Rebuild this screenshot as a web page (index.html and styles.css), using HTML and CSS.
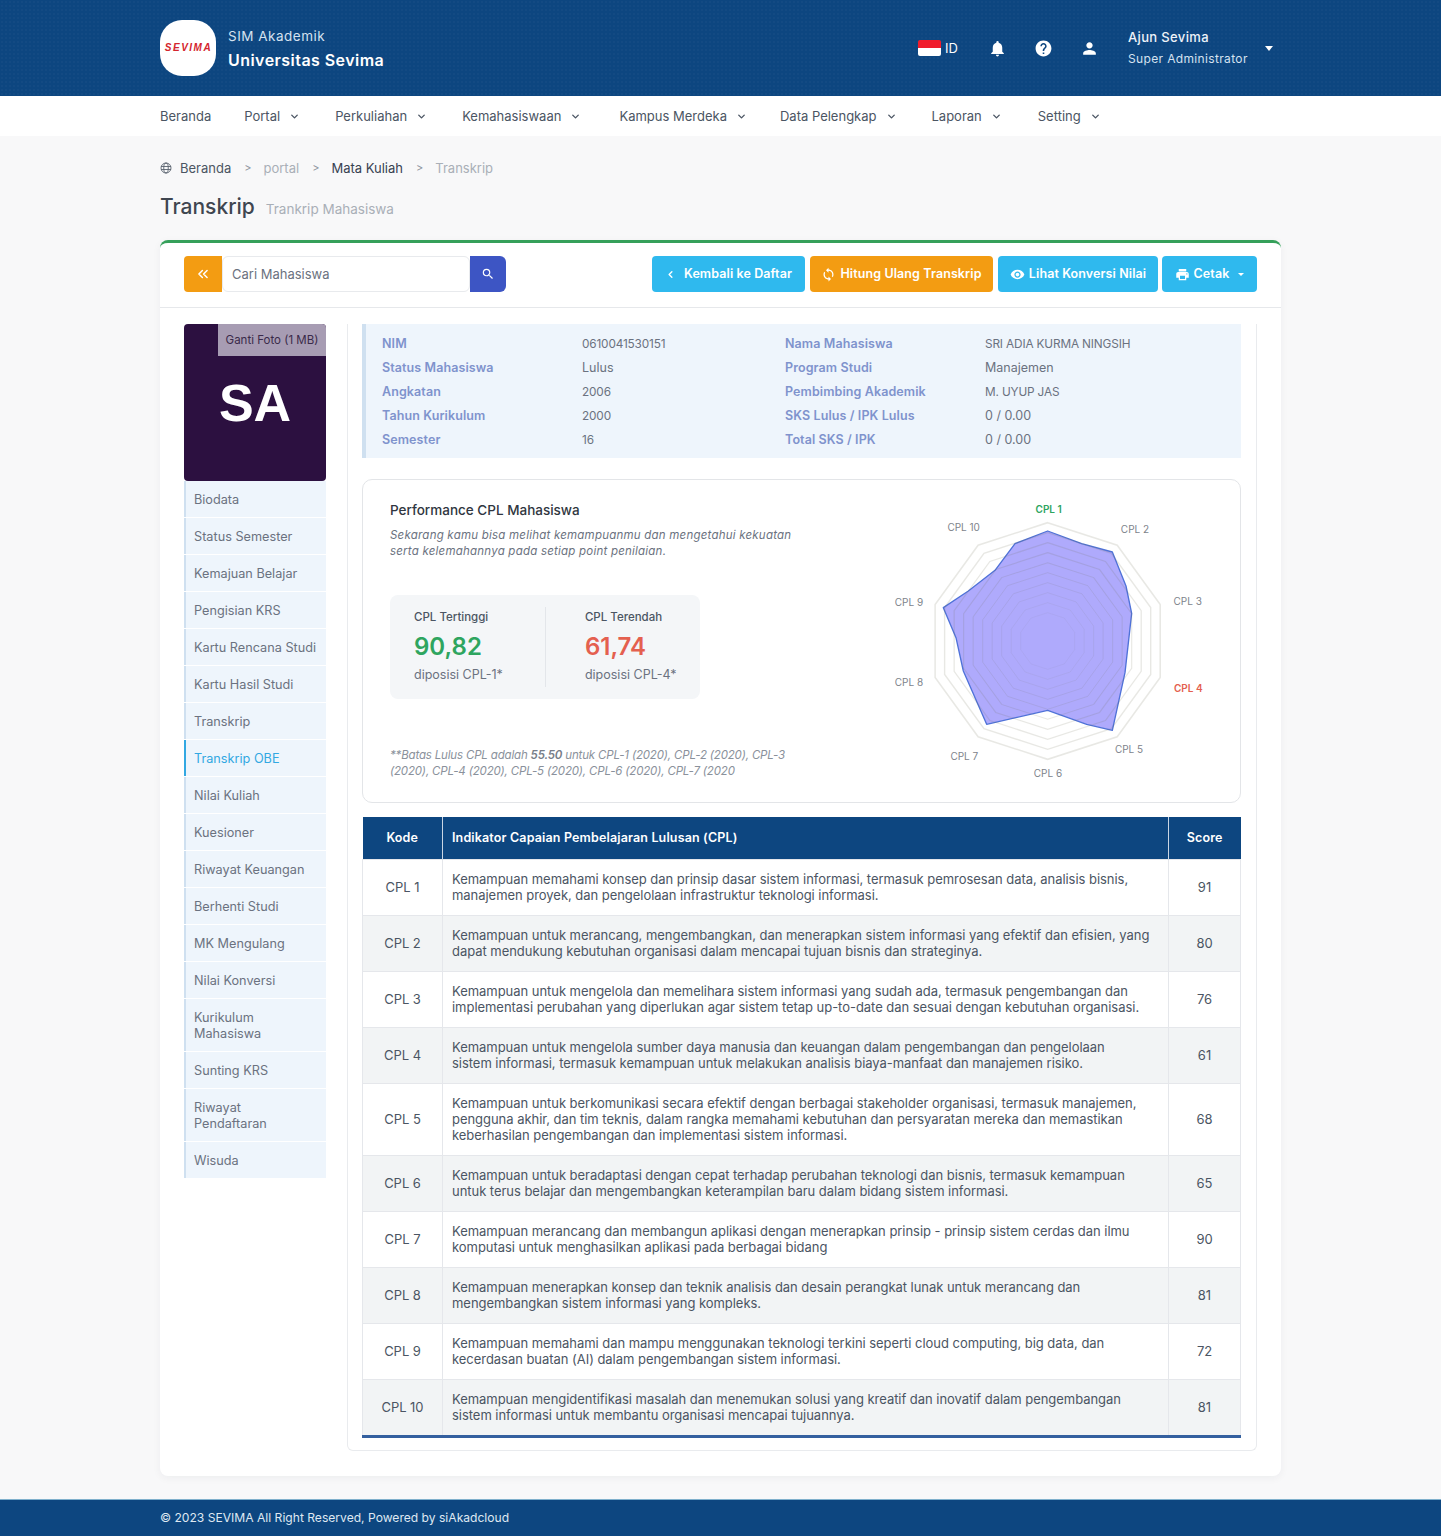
FILE: index.html
```html
<!DOCTYPE html>
<html lang="id">
<head>
<meta charset="utf-8">
<title>Transkrip</title>
<link rel="stylesheet" href="styles.css">
</head>
<body>
<svg class="defs" width="0" height="0" aria-hidden="true">
  <defs>
    <symbol id="chev" viewBox="0 0 24 24"><path d="M6 9l6 6 6-6" fill="none" stroke="currentColor" stroke-width="3" stroke-linecap="round" stroke-linejoin="round"/></symbol>
    <polygon id="deca" points="0,-100 58.78,-80.9 95.11,-30.9 95.11,30.9 58.78,80.9 0,100 -58.78,80.9 -95.11,30.9 -95.11,-30.9 -58.78,-80.9"/>
  </defs>
</svg>

<header class="topbar">
  <div class="wrap topbar-in">
    <div class="brand">
      <div class="logo"><span class="logo-text">SEVIMA</span></div>
      <div class="brand-text">
        <div class="brand-sub">SIM Akademik</div>
        <div class="brand-name">Universitas Sevima</div>
      </div>
    </div>
    <div class="tools">
      <div class="lang"><span class="flag"></span><span>ID</span></div>
      <svg class="tool bell" viewBox="0 0 24 24"><path d="M12 22c1.1 0 2-.9 2-2h-4a2 2 0 0 0 2 2zm6-6v-5c0-3.07-1.63-5.64-4.5-6.32V4a1.5 1.5 0 0 0-3 0v.68C7.64 5.36 6 7.92 6 11v5l-2 2v1h16v-1l-2-2z"/></svg>
      <svg class="tool help" viewBox="0 0 24 24"><path d="M12 2C6.48 2 2 6.48 2 12s4.48 10 10 10 10-4.48 10-10S17.52 2 12 2zm1 17h-2v-2h2v2zm2.07-7.75l-.9.92C13.45 12.9 13 13.5 13 15h-2v-.5c0-1.1.45-2.1 1.17-2.83l1.24-1.26c.37-.36.59-.86.59-1.41 0-1.1-.9-2-2-2s-2 .9-2 2H8c0-2.21 1.79-4 4-4s4 1.79 4 4c0 .88-.36 1.68-.93 2.25z"/></svg>
      <svg class="tool user" viewBox="0 0 24 24"><path d="M12 12c2.21 0 4-1.79 4-4s-1.79-4-4-4-4 1.79-4 4 1.79 4 4 4zm0 2c-2.67 0-8 1.34-8 4v2h16v-2c0-2.66-5.33-4-8-4z"/></svg>
      <div class="who">
        <div class="who-name">Ajun Sevima</div>
        <div class="who-role">Super Administrator</div>
      </div>
      <span class="caret-lg"></span>
    </div>
  </div>
</header>

<nav class="navbar">
  <div class="wrap nav-in">
    <a class="nav-item n1">Beranda</a>
    <a class="nav-item n2">Portal<svg class="chev"><use href="#chev"/></svg></a>
    <a class="nav-item n3">Perkuliahan<svg class="chev"><use href="#chev"/></svg></a>
    <a class="nav-item n4">Kemahasiswaan<svg class="chev"><use href="#chev"/></svg></a>
    <a class="nav-item n5">Kampus Merdeka<svg class="chev"><use href="#chev"/></svg></a>
    <a class="nav-item n6">Data Pelengkap<svg class="chev"><use href="#chev"/></svg></a>
    <a class="nav-item n7">Laporan<svg class="chev"><use href="#chev"/></svg></a>
    <a class="nav-item n8">Setting<svg class="chev"><use href="#chev"/></svg></a>
  </div>
</nav>

<main class="wrap main">
  <div class="crumbs">
    <svg class="globe" viewBox="0 0 24 24"><g fill="none" stroke="currentColor" stroke-width="1.8"><circle cx="12" cy="12" r="10"/><ellipse cx="12" cy="12" rx="4.5" ry="10"/><path d="M2 9h20M2 15h20"/></g></svg>
    <span class="crumb c-home">Beranda</span><span class="sep">&gt;</span>
    <span class="crumb c-muted c-portal">portal</span><span class="sep">&gt;</span>
    <span class="crumb c-dark">Mata Kuliah</span><span class="sep">&gt;</span>
    <span class="crumb c-muted">Transkrip</span>
  </div>
  <div class="title-row">
    <h1 class="title">Transkrip</h1>
    <span class="subtitle">Trankrip Mahasiswa</span>
  </div>

  <section class="card">
    <div class="toolbar">
      <div class="search">
        <button class="s-back"><svg class="s-ico" viewBox="0 0 24 24"><path d="M11 6l-6 6 6 6M19 6l-6 6 6 6" fill="none" stroke="currentColor" stroke-width="2.6" stroke-linecap="round" stroke-linejoin="round"/></svg></button>
        <div class="s-input">Cari Mahasiswa</div>
        <button class="s-go"><svg class="s-ico" viewBox="0 0 24 24"><path fill="currentColor" d="M15.5 14h-.79l-.28-.27A6.47 6.47 0 0 0 16 9.5 6.5 6.5 0 1 0 9.5 16c1.61 0 3.09-.59 4.23-1.57l.27.28v.79l5 4.99L20.49 19l-4.99-5zm-6 0C7.01 14 5 11.99 5 9.5S7.01 5 9.5 5 14 7.01 14 9.5 11.99 14 9.5 14z"/></svg></button>
      </div>
      <div class="actions">
        <button class="btn b-back"><svg class="b-ico small" viewBox="0 0 24 24"><path d="M15 6l-6 6 6 6" fill="none" stroke="currentColor" stroke-width="3" stroke-linecap="round" stroke-linejoin="round"/></svg>Kembali ke Daftar</button>
        <button class="btn b-calc"><svg class="b-ico" viewBox="0 0 24 24"><path fill="currentColor" d="M12 4V1L8 5l4 4V6c3.31 0 6 2.69 6 6 0 1.01-.25 1.97-.7 2.8l1.46 1.46A7.93 7.93 0 0 0 20 12c0-4.42-3.58-8-8-8zm0 14c-3.31 0-6-2.69-6-6 0-1.01.25-1.97.7-2.8L5.24 7.74A7.93 7.93 0 0 0 4 12c0 4.42 3.58 8 8 8v3l4-4-4-4v3z"/></svg>Hitung Ulang Transkrip</button>
        <button class="btn b-conv"><svg class="b-ico" viewBox="0 0 24 24"><path fill="currentColor" d="M12 4.5C7 4.5 2.73 7.61 1 12c1.73 4.39 6 7.5 11 7.5s9.27-3.11 11-7.5c-1.73-4.39-6-7.5-11-7.5zM12 17c-2.76 0-5-2.24-5-5s2.24-5 5-5 5 2.24 5 5-2.24 5-5 5zm0-8c-1.66 0-3 1.34-3 3s1.34 3 3 3 3-1.34 3-3-1.34-3-3-3z"/></svg>Lihat Konversi Nilai</button>
        <button class="btn b-print"><svg class="b-ico" viewBox="0 0 24 24"><path fill="currentColor" d="M19 8H5c-1.66 0-3 1.34-3 3v6h4v4h12v-4h4v-6c0-1.66-1.34-3-3-3zm-3 11H8v-5h8v5zm3-7c-.55 0-1-.45-1-1s.45-1 1-1 1 .45 1 1-.45 1-1 1zm-1-9H6v4h12V3z"/></svg>Cetak<span class="caret-sm"></span></button>
      </div>
    </div>

    <div class="content">
      <aside class="side">
        <div class="avatar">
          <div class="ganti">Ganti Foto (1 MB)</div>
          <div class="initials">SA</div>
        </div>
        <ul class="menu">
          <li class="m-item">Biodata</li>
          <li class="m-item">Status Semester</li>
          <li class="m-item">Kemajuan Belajar</li>
          <li class="m-item">Pengisian KRS</li>
          <li class="m-item">Kartu Rencana Studi</li>
          <li class="m-item">Kartu Hasil Studi</li>
          <li class="m-item">Transkrip</li>
          <li class="m-item active">Transkrip OBE</li>
          <li class="m-item">Nilai Kuliah</li>
          <li class="m-item">Kuesioner</li>
          <li class="m-item">Riwayat Keuangan</li>
          <li class="m-item">Berhenti Studi</li>
          <li class="m-item">MK Mengulang</li>
          <li class="m-item">Nilai Konversi</li>
          <li class="m-item">Kurikulum<br>Mahasiswa</li>
          <li class="m-item">Sunting KRS</li>
          <li class="m-item">Riwayat<br>Pendaftaran</li>
          <li class="m-item">Wisuda</li>
        </ul>
      </aside>

      <div class="panel">
        <div class="info">
          <div class="i-l">NIM</div><div class="i-v tight">0610041530151</div><div class="i-l">Nama Mahasiswa</div><div class="i-v tight">SRI ADIA KURMA NINGSIH</div>
          <div class="i-l">Status Mahasiswa</div><div class="i-v">Lulus</div><div class="i-l">Program Studi</div><div class="i-v">Manajemen</div>
          <div class="i-l">Angkatan</div><div class="i-v tight">2006</div><div class="i-l">Pembimbing Akademik</div><div class="i-v tight">M. UYUP JAS</div>
          <div class="i-l">Tahun Kurikulum</div><div class="i-v tight">2000</div><div class="i-l">SKS Lulus / IPK Lulus</div><div class="i-v">0 / 0.00</div>
          <div class="i-l">Semester</div><div class="i-v tight">16</div><div class="i-l">Total SKS / IPK</div><div class="i-v">0 / 0.00</div>
        </div>

        <div class="perf">
          <div class="perf-left">
            <h2 class="perf-title">Performance CPL Mahasiswa</h2>
            <p class="perf-desc">Sekarang kamu bisa melihat kemampuanmu dan mengetahui kekuatan<br>serta kelemahannya pada setiap point penilaian.</p>
            <div class="stats">
              <div class="stat">
                <div class="stat-h">CPL Tertinggi</div>
                <div class="stat-n green">90,82</div>
                <div class="stat-p">diposisi CPL-1*</div>
              </div>
              <div class="stat stat-r">
                <div class="stat-h">CPL Terendah</div>
                <div class="stat-n red">61,74</div>
                <div class="stat-p">diposisi CPL-4*</div>
              </div>
            </div>
            <p class="perf-note">**Batas Lulus CPL adalah <b>55.50</b> untuk CPL-1 (2020), CPL-2 (2020), CPL-3<br>(2020), CPL-4 (2020), CPL-5 (2020), CPL-6 (2020), CPL-7 (2020</p>
          </div>
          <svg class="radar" viewBox="0 0 1020 900">
            <polygon class="area" points="503,120 605,158 697,183 738,285 755,367 735,545 697,718 620,700 503,658 320,700 250,540 228,440 190,350 265,300 345,238 405,158"/>
            <g transform="translate(503 450)">
              <g class="rings">
                <use href="#deca" transform="scale(3.55)"/>
                <use href="#deca" transform="scale(3.25)"/>
                <use href="#deca" transform="scale(2.95)"/>
                <use href="#deca" transform="scale(2.65)"/>
                <use href="#deca" transform="scale(2.35)"/>
                <use href="#deca" transform="scale(2.05)"/>
                <use href="#deca" transform="scale(1.75)"/>
                <use href="#deca" transform="scale(1.45)"/>
                <use href="#deca" transform="scale(1.15)"/>
                <use href="#deca" transform="scale(0.85)"/>
              </g>
            </g>
            <g class="labels">
              <text class="l-hi" x="506" y="67" text-anchor="middle">CPL 1</text>
              <text x="765" y="127" text-anchor="middle">CPL 2</text>
              <text x="923" y="343" text-anchor="middle">CPL 3</text>
              <text class="l-lo" x="925" y="604" text-anchor="middle">CPL 4</text>
              <text x="747" y="785" text-anchor="middle">CPL 5</text>
              <text x="504" y="857" text-anchor="middle">CPL 6</text>
              <text x="253" y="806" text-anchor="middle">CPL 7</text>
              <text x="87" y="584" text-anchor="middle">CPL 8</text>
              <text x="87" y="345" text-anchor="middle">CPL 9</text>
              <text x="251" y="120" text-anchor="middle">CPL 10</text>
            </g>
          </svg>
        </div>

        <table class="cpl">
          <colgroup><col class="c1"><col class="c2"><col class="c3"></colgroup>
          <thead>
            <tr><th class="ctr">Kode</th><th>Indikator Capaian Pembelajaran Lulusan (CPL)</th><th class="ctr">Score</th></tr>
          </thead>
          <tbody>
            <tr><td class="ctr">CPL 1</td><td>Kemampuan memahami konsep dan prinsip dasar sistem informasi, termasuk pemrosesan data, analisis bisnis,<br>manajemen proyek, dan pengelolaan infrastruktur teknologi informasi.</td><td class="ctr">91</td></tr>
            <tr><td class="ctr">CPL 2</td><td>Kemampuan untuk merancang, mengembangkan, dan menerapkan sistem informasi yang efektif dan efisien, yang<br>dapat mendukung kebutuhan organisasi dalam mencapai tujuan bisnis dan strateginya.</td><td class="ctr">80</td></tr>
            <tr><td class="ctr">CPL 3</td><td>Kemampuan untuk mengelola dan memelihara sistem informasi yang sudah ada, termasuk pengembangan dan<br>implementasi perubahan yang diperlukan agar sistem tetap up-to-date dan sesuai dengan kebutuhan organisasi.</td><td class="ctr">76</td></tr>
            <tr><td class="ctr">CPL 4</td><td>Kemampuan untuk mengelola sumber daya manusia dan keuangan dalam pengembangan dan pengelolaan<br>sistem informasi, termasuk kemampuan untuk melakukan analisis biaya-manfaat dan manajemen risiko.</td><td class="ctr">61</td></tr>
            <tr><td class="ctr">CPL 5</td><td>Kemampuan untuk berkomunikasi secara efektif dengan berbagai stakeholder organisasi, termasuk manajemen,<br>pengguna akhir, dan tim teknis, dalam rangka memahami kebutuhan dan persyaratan mereka dan memastikan<br>keberhasilan pengembangan dan implementasi sistem informasi.</td><td class="ctr">68</td></tr>
            <tr><td class="ctr">CPL 6</td><td>Kemampuan untuk beradaptasi dengan cepat terhadap perubahan teknologi dan bisnis, termasuk kemampuan<br>untuk terus belajar dan mengembangkan keterampilan baru dalam bidang sistem informasi.</td><td class="ctr">65</td></tr>
            <tr><td class="ctr">CPL 7</td><td>Kemampuan merancang dan membangun aplikasi dengan menerapkan prinsip - prinsip sistem cerdas dan ilmu<br>komputasi untuk menghasilkan aplikasi pada berbagai bidang</td><td class="ctr">90</td></tr>
            <tr><td class="ctr">CPL 8</td><td>Kemampuan menerapkan konsep dan teknik analisis dan desain perangkat lunak untuk merancang dan<br>mengembangkan sistem informasi yang kompleks.</td><td class="ctr">81</td></tr>
            <tr><td class="ctr">CPL 9</td><td>Kemampuan memahami dan mampu menggunakan teknologi terkini seperti cloud computing, big data, dan<br>kecerdasan buatan (AI) dalam pengembangan sistem informasi.</td><td class="ctr">72</td></tr>
            <tr><td class="ctr">CPL 10</td><td>Kemampuan mengidentifikasi masalah dan menemukan solusi yang kreatif dan inovatif dalam pengembangan<br>sistem informasi untuk membantu organisasi mencapai tujuannya.</td><td class="ctr">81</td></tr>
          </tbody>
        </table>
      </div>
    </div>
  </section>
</main>

<footer class="footer">
  <div class="wrap">© 2023 SEVIMA All Right Reserved, Powered by siAkadcloud</div>
</footer>
</body>
</html>
```

FILE: styles.css
```css
* { box-sizing: border-box; }
html, body { margin: 0; padding: 0; }
body {
  background: #f8f8f9;
  color: #4b5563;
  font-family: "Inter", "Noto Sans", sans-serif;
  font-size: 13px;
  line-height: 16px;
}
.defs { position: absolute; }
.wrap { width: 1121px; margin: 0 auto; }
h1, h2, p, ul { margin: 0; padding: 0; }
ul { list-style: none; }
button { border: 0; font: inherit; cursor: pointer; }

/* top bar */
.topbar {
  height: 96px;
  background-color: #0d4680;
  background-image: radial-gradient(rgba(255,255,255,.025) 1px, transparent 1px);
  background-size: 4px 4px;
}
.topbar-in { height: 96px; display: flex; justify-content: space-between; align-items: center; }
.brand { display: flex; align-items: center; gap: 12px; }
.logo {
  width: 56px; height: 56px; border-radius: 22px; background: #fff;
  display: flex; align-items: center; justify-content: center;
}
.logo-text { color: #d4262e; font: italic 800 10px/1 "Liberation Sans", sans-serif; letter-spacing: 1.5px; margin-right: -1px; }
.brand-text { padding-top: 2px; }
.brand-sub { color: #d5e2f0; font-size: 13.5px; line-height: 20px; margin-bottom: 2px; letter-spacing: .5px; }
.brand-name { color: #fff; font-size: 16px; font-weight: 600; line-height: 24px; letter-spacing: .45px; }
.tools { display: flex; align-items: center; width: 363px; height: 96px; color: #fff; padding-right: 8px; }
.lang { display: flex; align-items: center; gap: 4px; font-size: 13px; width: 66px; }
.flag {
  width: 23px; height: 16px; border-radius: 2px;
  background: linear-gradient(#f01c2c 50%, #fff 50%);
}
.tool { width: 19px; height: 19px; fill: #fff; margin-right: 27px; flex: none; }
.bell { margin-left: 4px; }
.user { margin-right: 29px; }
.who { flex: 1; }
.who-name { font-size: 13px; font-weight: 500; line-height: 16px; color: #eef3f9; margin-bottom: 6px; margin-top: -1px; letter-spacing: .35px; }
.who-role { font-size: 12px; line-height: 16px; color: #d5e2f0; letter-spacing: .35px; }
.caret-lg { width: 0; height: 0; border: 4.5px solid transparent; border-top: 5px solid #fff; border-bottom: 0; }

/* nav */
.navbar { height: 40px; background: #fff; }
.nav-in { height: 40px; display: flex; align-items: center; }
.nav-item { display: flex; align-items: center; color: #4b5563; font-size: 13px; white-space: nowrap; }
.chev { width: 11px; height: 11px; margin-left: 9px; color: #4b5563; }
.n2 { margin-left: 33px; } .n3 { margin-left: 35px; } .n4 { margin-left: 35px; }
.n5 { margin-left: 38px; } .n6 { margin-left: 33px; } .n7 { margin-left: 35px; } .n8 { margin-left: 36px; }

/* head of page */
.main { padding-top: 24px; padding-bottom: 23px; }
.crumbs { display: flex; align-items: center; height: 16px; color: #4b5563; }
.globe { width: 12px; height: 12px; color: #59626e; margin-right: 8px; }
.crumb { font-size: 13px; }
.c-muted { color: #a9afb7; }
.c-dark { color: #374151; }
.sep { color: #8f969f; font-size: 11px; margin: 0 12px 0 13px; }
.title-row { display: flex; align-items: baseline; gap: 11px; margin-top: 18px; height: 29px; }
.title { font-size: 21px; font-weight: 500; line-height: 26px; color: #3f4650; }
.subtitle { font-size: 13.5px; color: #a9afb7; }

/* card */
.card {
  margin-top: 17px;
  background: #fff;
  border-top: 3px solid #35a05a;
  border-radius: 8px;
  box-shadow: 0 2px 8px rgba(20,30,50,.05);
  height: 1236px;
}
.toolbar {
  height: 65px; padding: 13px 24px 0;
  display: flex; justify-content: space-between; align-items: flex-start;
  border-bottom: 1px solid #e6e8eb;
}
.search { display: flex; height: 36px; width: 322px; }
.s-back { width: 38px; background: #f39c12; color: #fff; border-radius: 4px 0 0 4px; display: flex; align-items: center; justify-content: center; padding: 0; }
.s-input { width: 248px; border: 1px solid #e8eaed; border-radius: 6px; padding: 0 9px; line-height: 34px; color: #6b7280; }
.s-go { width: 36px; background: #3d55c4; color: #fff; border-radius: 0 6px 6px 0; display: flex; align-items: center; justify-content: center; padding: 0; }
.s-ico { width: 14px; height: 14px; }
.actions { display: flex; gap: 4px; }
.btn {
  height: 36px; border-radius: 4px; color: #fff; font-size: 12.5px; font-weight: 600;
  display: flex; align-items: center; justify-content: center; white-space: nowrap; padding: 0; letter-spacing: .1px;
}
.b-back, .b-conv, .b-print { background: #2fb9ee; }
.b-calc { background: #f39c12; margin-left: 1px; }
.b-back { width: 153px; }
.b-calc { width: 183px; }
.b-conv { width: 160px; margin-left: 1px; }
.b-print { width: 95px; }
.b-ico { width: 15px; height: 15px; margin-right: 4px; flex: none; }
.b-ico.small { width: 11px; height: 11px; margin-right: 8px; }
.caret-sm { width: 0; height: 0; margin-left: 9px; border: 3px solid transparent; border-top: 3.5px solid #fff; border-bottom: 0; }

.content { display: flex; align-items: flex-start; padding: 16px 24px 0; }
.side { width: 142px; flex: none; }
.avatar { height: 157px; background: #2c1040; border-radius: 4px; position: relative; text-align: center; color: #fff; }
.ganti {
  position: absolute; top: 0; right: 0; width: 108px; height: 32px;
  background: #a79cb3; color: #3a2a4a; font-size: 11.5px; line-height: 32px; border-top-right-radius: 4px;
}
.initials { font-size: 52px; font-weight: 700; line-height: 60px; padding-top: 49px; font-family: "Liberation Sans", sans-serif; }
.m-item {
  background: #eef5fc; border-left: 2px solid #cfe0f0; padding: 11px 8px 9px;
  margin-bottom: 1px; color: #6b7280; font-size: 12.7px; white-space: nowrap;
}
.m-item:last-child { margin-bottom: 0; }
.m-item.active { color: #32a8e2; border-left-color: #32a8e2; }

.panel {
  margin-left: 21px; width: 910px; height: 1127px; padding: 0 15px 0 14px;
  border: 1px solid #e9ebee; border-top: 0; border-radius: 0 0 6px 6px;
}
.info {
  height: 134px; background: #eef5fc; border-left: 4px solid #cfe0f0; padding: 7px 0 0 16px;
  display: grid; grid-template-columns: 200px 203px 200px 1fr; grid-template-rows: repeat(5, 24px); align-content: start; align-items: center; font-size: 12.5px;
}
.i-l { color: #7f93cd; font-weight: 600; white-space: nowrap; letter-spacing: .1px; padding-top: 2px; }
.i-v { color: #6b7280; white-space: nowrap; padding-top: 2px; }
.i-v.tight { font-size: 11.8px; letter-spacing: -.15px; }

.perf {
  margin-top: 21px; height: 324px; border: 1px solid #e3e5e8; border-radius: 10px;
  display: flex; padding: 11px 0 0 27px;
}
.perf-left { width: 490px; flex: none; padding-top: 10px; }
.perf-title { font-size: 13.5px; font-weight: 500; line-height: 18px; color: #2f3640; }
.perf-desc { font-style: italic; font-size: 11.5px; line-height: 16px; color: #6b7280; margin-top: 8px; white-space: nowrap; letter-spacing: .22px; }
.stats {
  margin-top: 36px; width: 310px; height: 104px; background: #f4f6f8; border-radius: 8px;
  display: flex; position: relative;
}
.stat { width: 156px; padding: 14px 0 0 24px; }
.stat-r { padding-left: 40px; }
.stats::after { content: ""; position: absolute; left: 155px; top: 12px; bottom: 12px; width: 1px; background: #e3e6ea; }
.stat-h { font-size: 11.5px; font-weight: 500; color: #4b5563; }
.stat-n { font-size: 24px; font-weight: 600; line-height: 30px; margin-top: 7px; }
.green { color: #2ea55f; }
.red { color: #e4604f; }
.stat-p { font-size: 12.5px; margin-top: 5px; color: #6b7280; white-space: nowrap; }
.perf-note { margin-top: 48px; font-style: italic; font-size: 11.5px; line-height: 16px; color: #8a919b; white-space: nowrap; letter-spacing: -.17px; }
.perf-note b { font-weight: 600; color: #767d88; }

.radar { width: 340px; height: 300px; flex: none; }
.rings use { fill: none; stroke: rgba(110,110,90,.16); stroke-width: 1.3; vector-effect: non-scaling-stroke; }
.area { fill: rgba(118,108,250,.58); stroke: #4f72d8; stroke-width: 4; stroke-linejoin: round; }
.labels text { font-size: 30px; fill: #7d838b; }
.labels .l-hi { fill: #2ea55f; font-weight: 600; }
.labels .l-lo { fill: #e4604f; font-weight: 600; }

/* table */
.cpl {
  margin-top: 14px; width: 879px; table-layout: fixed; border-collapse: collapse;
  border-bottom: 3px solid #34609f;
}
.c1 { width: 80px; } .c3 { width: 72px; }
.cpl th {
  height: 42px; background: #0d4680; color: #fff; font-size: 12.5px; font-weight: 600;
  text-align: left; padding: 0 9px; border-left: 1px solid #c9d6e4; letter-spacing: .15px;
}
.cpl th:first-child { border-left: 0; }
.cpl td {
  padding: 11px 9px 12px; border: 1px solid #e5e7eb; color: #4b5563; font-size: 13px; line-height: 16px;
  white-space: nowrap; letter-spacing: -.04px;
}
.cpl tr:nth-child(even) td { background: #f2f4f5; }
.cpl .ctr { text-align: center; padding-left: 0; padding-right: 0; }

/* footer */
.footer {
  height: 37px; background: #0d4680; border-top: 1px solid #7fb0cc; color: #dfe8f2; font-size: 12.1px; line-height: 36px;
}
```
